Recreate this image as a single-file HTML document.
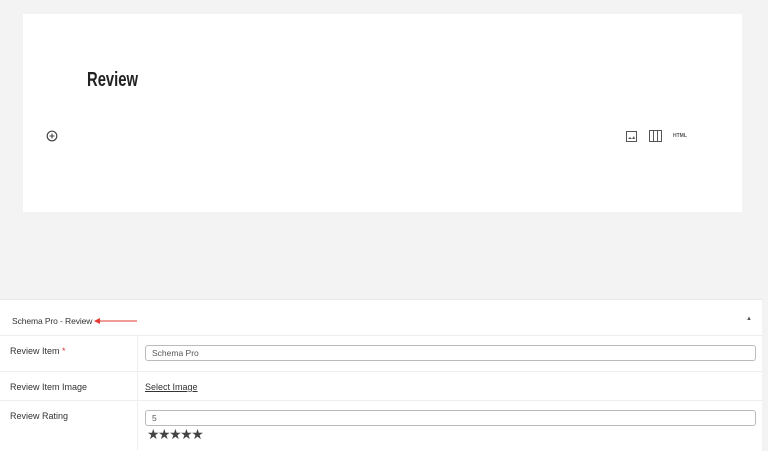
<!DOCTYPE html><html><head><style>
body{margin:0;width:768px;height:450px;background:#f3f3f3;font-family:"Liberation Sans",sans-serif;position:relative;overflow:hidden}
.card{position:absolute;left:23px;top:14px;width:719px;height:198px;background:#fff}
.t{position:absolute;left:87px;top:69px;font-size:20px;color:#222;font-family:"Liberation Sans Narrow","Liberation Sans",sans-serif;transform:scaleX(.74);transform-origin:left}
.p{position:absolute;left:0;top:299px;width:762px;height:151px;background:#fff;border-top:1px solid #e8e8e8}
.hl{position:absolute;left:0;width:762px;height:1px;background:#eee}
.l{position:absolute;left:10px;font-size:9px;color:#333}
.in{position:absolute;left:145px;width:611px;height:16px;border:1px solid #bbb;border-radius:3px;font-size:8.5px;color:#555;line-height:15px;padding-left:6px;box-sizing:border-box;}
</style></head><body>
<div class="card"></div>
<div class="t" style="font-weight:bold">Review</div>
<svg style="position:absolute;left:46px;top:130px" width="12" height="12"><circle cx="6" cy="6" r="4.8" fill="none" stroke="#444" stroke-width="1.2"/><path d="M6 3.5v5M3.5 6h5" stroke="#444" stroke-width="1.1"/></svg>
<svg style="position:absolute;left:626px;top:131px" width="11" height="11"><rect x="0.5" y="0.5" width="10" height="10" fill="none" stroke="#555"/><path d="M2 8l2-2 2 2 2-3 1 3z" fill="#555"/></svg>
<svg style="position:absolute;left:649px;top:130px" width="13" height="12"><rect x="0.5" y="0.5" width="12" height="11" fill="none" stroke="#555"/><path d="M4.5 1v10M8.5 1v10" stroke="#555"/></svg>
<div style="position:absolute;left:673px;top:133px;font-size:5px;color:#555;font-weight:bold">HTML</div>
<div class="p"></div>
<div style="position:absolute;left:12px;top:316px;font-size:8.5px;color:#333;letter-spacing:-0.1px">Schema Pro - Review</div>
<svg style="position:absolute;left:94px;top:317px" width="45" height="8"><path d="M3 4H43" stroke="#e53935" stroke-width="1"/><path d="M0 4l6-3v6z" fill="#e53935"/></svg>
<div style="position:absolute;left:746px;top:316px;font-size:6px;color:#555">▲</div>
<div class="hl" style="top:335px"></div>
<div class="hl" style="top:371px"></div>
<div class="hl" style="top:400px"></div>
<div style="position:absolute;left:137px;top:335px;width:1px;height:115px;background:#eee"></div>
<div class="l" style="top:346px">Review Item <span style="color:#d63638">*</span></div>
<div class="in" style="top:345px">Schema Pro</div>
<div class="l" style="top:382px">Review Item Image</div>
<div style="position:absolute;left:145px;top:382px;font-size:9px;color:#333;text-decoration:underline">Select Image</div>
<div class="l" style="top:411px">Review Rating</div>
<div class="in" style="top:410px">5</div>
<div style="position:absolute;left:147px;top:426px;font-size:14px;color:#444;letter-spacing:-1.5px">★★★★★</div>
</body></html>
